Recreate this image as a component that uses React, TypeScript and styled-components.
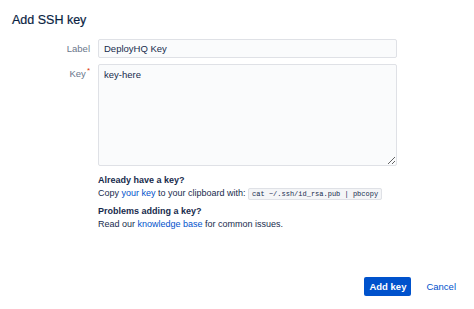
import React from 'react';
import styled, {createGlobalStyle} from 'styled-components';

const GlobalStyle = createGlobalStyle`
  html, body {
    margin: 0;
    padding: 0;
    background: #fff;
  }

  body {
    font-family: 'Liberation Sans', Arial, sans-serif;
    color: #172b4d;
  }
`;

const Page = styled.div`
  width: 474px;
  height: 309px;
  box-sizing: border-box;
  padding: 13px 12px 0 12px;
  display: flex;
  flex-direction: column;
`;

const Title = styled.h1`
  margin: 0 0 11px;
  font-size: 12.5px;
  font-weight: 400;
  line-height: 15px;
  color: #091e42;
  -webkit-text-stroke: 0.2px #091e42;
`;

const Form = styled.form`
  display: grid;
  grid-template-columns: 78px 299px;
  column-gap: 8px;
  row-gap: 6px;
  align-items: start;
`;

const FieldLabel = styled.label`
  text-align: right;
  font-size: 9.5px;
  color: #6b778c;
  padding-top: 4px;
`;

const Required = styled.span`
  color: #de350b;
  font-size: 8px;
  vertical-align: super;
  line-height: 0;
  margin-left: 1px;
`;

const TextInput = styled.input`
  box-sizing: border-box;
  width: 100%;
  height: 19px;
  margin: 0;
  padding: 0 5px;
  border: 1px solid #dfe1e6;
  border-radius: 2px;
  background: #fafbfc;
  font-family: 'Liberation Sans', Arial, sans-serif;
  font-size: 9.5px;
  color: #172b4d;
  outline: none;
`;

const TextArea = styled.textarea`
  box-sizing: border-box;
  width: 100%;
  height: 102px;
  margin: 0;
  padding: 4px 5px;
  border: 1px solid #dfe1e6;
  border-radius: 2px;
  background: #fafbfc;
  font-family: 'Liberation Sans', Arial, sans-serif;
  font-size: 9.5px;
  color: #172b4d;
  outline: none;
  resize: vertical;
`;

const Help = styled.div`
  grid-column: 2;
  padding-top: 2px;
  font-size: 9px;
  line-height: 13px;
  color: #172b4d;
`;

const HelpTitle = styled.div<{ $first?: boolean }>`
  font-weight: 700;
  margin-top: ${(p) => (p.$first ? '0' : '4px')};
`;

const Link = styled.a`
  color: #0052cc;
  text-decoration: none;
`;

const Code = styled.code`
  font-family: 'Liberation Mono', 'Courier New', monospace;
  font-size: 7px;
  background: #f4f5f7;
  border: 1px solid #dfe1e6;
  border-radius: 2px;
  padding: 1px 3px;
  color: #172b4d;
`;

const Actions = styled.div`
  margin-top: auto;
  margin-bottom: 13px;
  display: flex;
  justify-content: flex-end;
  align-items: center;
  gap: 9px;
`;

const Button = styled.button<{ $primary?: boolean }>`
  height: 19px;
  padding: 0 ${(p) => (p.$primary ? '5px' : '6px')};
  border: none;
  border-radius: 2px;
  font-family: 'Liberation Sans', Arial, sans-serif;
  font-size: 9.5px;
  font-weight: ${(p) => (p.$primary ? 700 : 400)};
  background: ${(p) => (p.$primary ? '#0052cc' : 'transparent')};
  color: ${(p) => (p.$primary ? '#fff' : '#0052cc')};
  cursor: pointer;
`;

export default function App() {
    return (
        <>
            <GlobalStyle/>
            <Page>
                <Title>Add SSH key</Title>
                <Form>
                    <FieldLabel>Label</FieldLabel>
                    <TextInput defaultValue="DeployHQ Key"/>

                    <FieldLabel>Key<Required>*</Required></FieldLabel>
                    <TextArea defaultValue="key-here"/>

                    <Help>
                        <HelpTitle $first>Already have a key?</HelpTitle>
                        <div>
                            Copy <Link href="#">your key</Link> to your clipboard with:{' '}
                            <Code>cat ~/.ssh/id_rsa.pub | pbcopy</Code>
                        </div>
                        <HelpTitle>Problems adding a key?</HelpTitle>
                        <div>
                            Read our <Link href="#">knowledge base</Link> for common issues.
                        </div>
                    </Help>
                </Form>
                <Actions>
                    <Button type="button" $primary>Add key</Button>
                    <Button type="button">Cancel</Button>
                </Actions>
            </Page>
        </>
    );
}
